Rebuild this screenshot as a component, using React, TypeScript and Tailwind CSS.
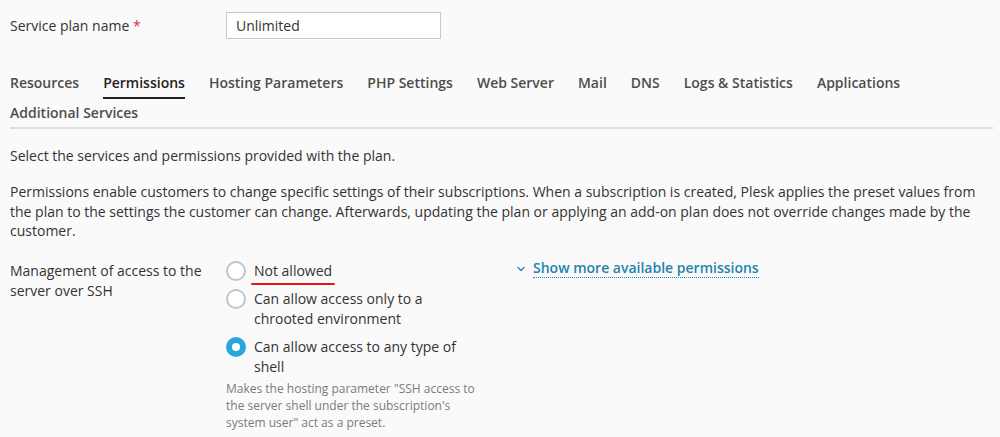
import { ChevronDown } from "lucide-react";

const tabs = [
  "Resources",
  "Permissions",
  "Hosting Parameters",
  "PHP Settings",
  "Web Server",
  "Mail",
  "DNS",
  "Logs & Statistics",
  "Applications",
  "Additional Services",
];

function Radio({ checked }: { checked?: boolean }) {
  return checked ? (
    <span className="flex h-5 w-5 shrink-0 items-center justify-center rounded-full bg-[#28a7dd]">
      <span className="h-2 w-2 rounded-full bg-white" />
    </span>
  ) : (
    <span className="h-5 w-5 shrink-0 rounded-full border-2 border-[#c4c4c4] bg-white" />
  );
}

export default function App() {
  return (
    <div className="min-h-[437px] bg-[#fafafa] pl-[10px] pr-[7px] pt-[12px] font-['Open_Sans',sans-serif] text-[14px] leading-5 text-[#333]">
      <div className="flex items-center">
        <label className="w-[216px]">
          Service plan name <span className="text-[#d0393e]">*</span>
        </label>
        <div className="flex h-[27px] w-[215px] items-center border border-[#c9c9c9] bg-white px-[9px]">
          Unlimited
        </div>
      </div>

      <div className="mt-[34px] flex flex-wrap gap-x-6 gap-y-[6px] border-b-2 border-[#dedede]">
        {tabs.map((t) => (
          <div
            key={t}
            className={
              t === "Permissions"
                ? "-mb-[2px] border-b-2 border-[#222] pb-[4px] font-semibold text-[#222]"
                : "-mb-[2px] border-b-2 border-transparent pb-[4px] font-semibold text-[#4d4d4d]"
            }
          >
            {t}
          </div>
        ))}
      </div>

      <p className="mt-[17px]">Select the services and permissions provided with the plan.</p>
      <p className="mt-4 pr-[7px] leading-[19.5px]">
        Permissions enable customers to change specific settings of their subscriptions. When a
        subscription is created, Plesk applies the preset values from the plan to the settings the
        customer can change. Afterwards, updating the plan or applying an add-on plan does not
        override changes made by the customer.
      </p>

      <div className="mt-[20px] flex">
        <div className="w-[216px] pr-4">Management of access to the server over SSH</div>
        <div className="w-[252px]">
          <div className="flex flex-col gap-2">
            <div className="flex gap-2">
              <Radio />
              <span className="relative">
                Not allowed
                <span className="absolute left-[-3px] right-[-3px] top-[22px] h-[2px] rounded bg-[#e8141b]" />
              </span>
            </div>
            <div className="flex gap-2">
              <Radio />
              <span>Can allow access only to a chrooted environment</span>
            </div>
            <div className="flex gap-2">
              <Radio checked />
              <span className="pr-4">Can allow access to any type of shell</span>
            </div>
          </div>
          <p className="mt-[3px] text-[12px] leading-[17px] text-[#7a7a7a]">
            Makes the hosting parameter "SSH access to the server shell under the subscription's
            system user" act as a preset.
          </p>
        </div>
        <div className="ml-[37px] flex items-start gap-[6px] text-[#2383ad]">
          <ChevronDown className="mt-[2px] h-3 w-3" strokeWidth={2.5} />
          <span className="-mt-[2px] border-b border-dotted border-[#2383ad] font-semibold leading-[18px]">
            Show more available permissions
          </span>
        </div>
      </div>
    </div>
  );
}
